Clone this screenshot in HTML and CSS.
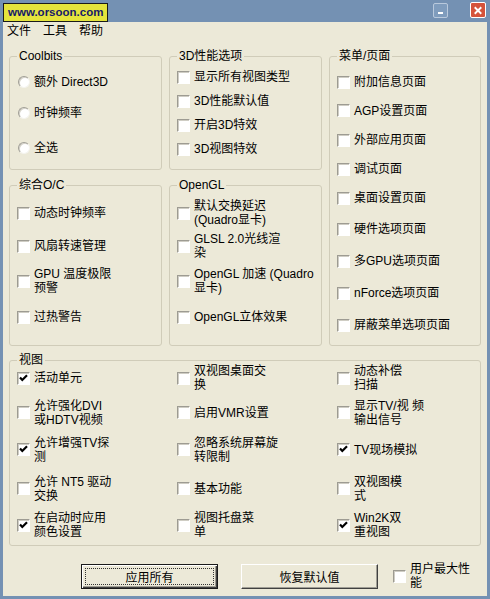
FILE: index.html
```html
<!DOCTYPE html>
<html>
<head>
<meta charset="utf-8">
<link rel="stylesheet" href="styles.css">
</head>
<body>
<div class="window">
  <div class="titlebar">
    <div class="brand">www.orsoon.com</div>
    <div class="tb-btns">
      <span class="tb-min"><span class="dash"></span></span>
      <span class="tb-close"><svg width="15" height="15" viewBox="0 0 15 15"><path d="M4 4 L11 11 M11 4 L4 11" stroke="#fff" stroke-width="2" fill="none"/></svg></span>
    </div>
  </div>
  <div class="client">
    <div class="menubar"><span>文件</span><span>工具</span><span>帮助</span></div>
    <div class="content">
      <div class="top-grid">
        <div class="group g-coolbits">
          <span class="legend">Coolbits</span>
          <div class="item"><span class="radio"></span><span>额外 Direct3D</span></div>
          <div class="item"><span class="radio"></span><span>时钟频率</span></div>
          <div class="item"><span class="radio"></span><span>全选</span></div>
        </div>
        <div class="group g-3d">
          <span class="legend">3D性能选项</span>
          <div class="item"><span class="cb"></span><span>显示所有视图类型</span></div>
          <div class="item"><span class="cb"></span><span>3D性能默认值</span></div>
          <div class="item"><span class="cb"></span><span>开启3D特效</span></div>
          <div class="item"><span class="cb"></span><span>3D视图特效</span></div>
        </div>
        <div class="group g-menu">
          <span class="legend">菜单/页面</span>
          <div class="item"><span class="cb"></span><span>附加信息页面</span></div>
          <div class="item"><span class="cb"></span><span>AGP设置页面</span></div>
          <div class="item"><span class="cb"></span><span>外部应用页面</span></div>
          <div class="item"><span class="cb"></span><span>调试页面</span></div>
          <div class="item"><span class="cb"></span><span>桌面设置页面</span></div>
          <div class="item"><span class="cb"></span><span>硬件选项页面</span></div>
          <div class="item"><span class="cb"></span><span>多GPU选项页面</span></div>
          <div class="item"><span class="cb"></span><span>nForce选项页面</span></div>
          <div class="item"><span class="cb"></span><span>屏蔽菜单选项页面</span></div>
        </div>
        <div class="group g-oc">
          <span class="legend">综合O/C</span>
          <div class="item"><span class="cb"></span><span>动态时钟频率</span></div>
          <div class="item"><span class="cb"></span><span>风扇转速管理</span></div>
          <div class="item"><span class="cb"></span><span class="lbl"><span>GPU 温度极限</span><span>预警</span></span></div>
          <div class="item"><span class="cb"></span><span>过热警告</span></div>
        </div>
        <div class="group g-ogl">
          <span class="legend">OpenGL</span>
          <div class="item"><span class="cb"></span><span class="lbl"><span>默认交换延迟</span><span>(Quadro显卡)</span></span></div>
          <div class="item"><span class="cb"></span><span class="lbl"><span>GLSL 2.0光线渲</span><span>染</span></span></div>
          <div class="item"><span class="cb"></span><span class="lbl"><span>OpenGL 加速 (Quadro</span><span>显卡)</span></span></div>
          <div class="item"><span class="cb"></span><span>OpenGL立体效果</span></div>
        </div>
      </div>
      <div class="group g-view">
        <span class="legend">视图</span>
        <div class="item"><span class="cb on"><svg width="11" height="11" viewBox="0 0 11 11"><path d="M2 4.5 L4.3 7 L9 2.3" stroke="#000" stroke-width="2.2" fill="none"/></svg></span><span>活动单元</span></div>
        <div class="item"><span class="cb"></span><span class="lbl"><span>双视图桌面交</span><span>换</span></span></div>
        <div class="item"><span class="cb"></span><span class="lbl"><span>动态补偿</span><span>扫描</span></span></div>
        <div class="item"><span class="cb"></span><span class="lbl"><span>允许强化DVI</span><span>或HDTV视频</span></span></div>
        <div class="item"><span class="cb"></span><span>启用VMR设置</span></div>
        <div class="item"><span class="cb"></span><span class="lbl"><span>显示TV/视 频</span><span>输出信号</span></span></div>
        <div class="item"><span class="cb on"><svg width="11" height="11" viewBox="0 0 11 11"><path d="M2 4.5 L4.3 7 L9 2.3" stroke="#000" stroke-width="2.2" fill="none"/></svg></span><span class="lbl"><span>允许增强TV探</span><span>测</span></span></div>
        <div class="item"><span class="cb"></span><span class="lbl"><span>忽略系统屏幕旋</span><span>转限制</span></span></div>
        <div class="item"><span class="cb on"><svg width="11" height="11" viewBox="0 0 11 11"><path d="M2 4.5 L4.3 7 L9 2.3" stroke="#000" stroke-width="2.2" fill="none"/></svg></span><span>TV现场模拟</span></div>
        <div class="item"><span class="cb"></span><span class="lbl"><span>允许 NT5 驱动</span><span>交换</span></span></div>
        <div class="item"><span class="cb"></span><span>基本功能</span></div>
        <div class="item"><span class="cb"></span><span class="lbl"><span>双视图模</span><span>式</span></span></div>
        <div class="item"><span class="cb on"><svg width="11" height="11" viewBox="0 0 11 11"><path d="M2 4.5 L4.3 7 L9 2.3" stroke="#000" stroke-width="2.2" fill="none"/></svg></span><span class="lbl"><span>在启动时应用</span><span>颜色设置</span></span></div>
        <div class="item"><span class="cb"></span><span class="lbl"><span>视图托盘菜</span><span>单</span></span></div>
        <div class="item"><span class="cb on"><svg width="11" height="11" viewBox="0 0 11 11"><path d="M2 4.5 L4.3 7 L9 2.3" stroke="#000" stroke-width="2.2" fill="none"/></svg></span><span class="lbl"><span>Win2K双</span><span>重视图</span></span></div>
      </div>
      <div class="bottom">
        <div class="btn default"><span class="focus">应用所有</span></div>
        <div class="btn">恢复默认值</div>
        <div class="item"><span class="cb"></span><span class="lbl"><span>用户最大性</span><span>能</span></span></div>
      </div>
    </div>
  </div>
</div>
</body>
</html>
```
FILE: styles.css
```css
* { box-sizing: border-box; }
html, body { margin: 0; padding: 0; }
body {
  width: 490px;
  height: 599px;
  overflow: hidden;
  background: #7491b3;
  font-family: "Liberation Sans", "Noto Sans CJK SC", sans-serif;
  font-size: 12px;
  color: #000;
}
.window { display: flex; flex-direction: column; height: 599px; }

.titlebar {
  height: 22px;
  flex: none;
  display: flex;
  align-items: flex-start;
  justify-content: space-between;
  padding: 0 4px 0 3px;
}
.brand {
  margin-top: 3px;
  height: 19px;
  width: 105px;
  background: #e4e43c;
  border: 1px solid #1a1a1a;
  font: bold 11.5px "Liberation Sans", sans-serif;
  color: #16196a;
  line-height: 17px;
  padding-left: 4px;
  white-space: nowrap;
}
.tb-btns { display: flex; align-items: flex-start; gap: 22px; margin-top: 3px; }
.tb-min {
  width: 15px; height: 15px;
  background: #7f9cbd;
  border: 1px solid #b9c9dc;
  border-radius: 2px;
  display: flex; align-items: flex-end;
  padding: 0 0 3px 4px;
}
.tb-min .dash { width: 5px; height: 2px; background: #fff; }
.tb-close {
  width: 16px; height: 16px;
  margin-top: -1px;
  background: #d5533b;
  border: 1px solid #fff;
  border-radius: 2px;
  display: flex; align-items: center; justify-content: center;
}

.client {
  flex: 1;
  background: #ece9d8;
  margin: 0 3px 3px 3px;
  display: flex;
  flex-direction: column;
}
.menubar {
  height: 18px;
  display: flex;
  gap: 12px;
  padding-left: 4px;
  align-items: center;
  line-height: 18px;
}
.content { padding: 16px 0 0 6px; }

.top-grid {
  display: grid;
  grid-template-columns: 153px 153px 152px;
  grid-template-rows: 114px 161px;
  column-gap: 7px;
  row-gap: 15px;
}
.group {
  position: relative;
  border: 1px solid #d0ccb9;
  border-radius: 3px;
  display: grid;
  align-content: start;
  align-items: center;
  padding-left: 7px;
}
.legend {
  position: absolute;
  top: -8px;
  left: 7px;
  padding: 0 2px;
  background: #ece9d8;
  line-height: 14px;
}
.item {
  display: flex;
  align-items: center;
  gap: 4px;
  white-space: nowrap;
  line-height: 14px;
}
.lbl { display: flex; flex-direction: column; }
.lbl > span { display: block; height: 14px; line-height: 14px; }

.g-coolbits { grid-column: 1; grid-row: 1; padding-top: 10px; grid-template-rows: 30px 32px 38px; }
.g-3d { grid-column: 2; grid-row: 1; padding-top: 8px; grid-template-rows: 24px 24px 24px 24px; }
.g-menu { grid-column: 3; grid-row: 1 / span 2; padding-top: 11px; grid-template-rows: 28px 29px 30px 28px 30px 32px 32px 32px 32px; }
.g-oc { grid-column: 1; grid-row: 2; padding-top: 11px; grid-template-rows: 32px 34px 36px 36px; }
.g-ogl { grid-column: 2; grid-row: 2; padding-top: 11px; grid-template-rows: 32px 34px 36px 36px; }
.g-view {
  margin-top: 14px;
  width: 472px;
  height: 186px;
  padding-top: 1px;
  grid-template-columns: 160px 160px auto;
  grid-template-rows: 32px 37px 37px 41px 32px;
}

.cb {
  flex: none;
  width: 13px; height: 13px;
  background: #fff;
  border: 1px solid;
  border-color: #9d9b92 #fff #fff #9d9b92;
  box-shadow: inset 1px 1px 0 #cfcdc4;
  display: flex; align-items: center; justify-content: center;
}
.cb svg { display: block; }
.radio {
  flex: none;
  width: 12px; height: 12px;
  margin-left: 1px;
  border-radius: 50%;
  background: #fff;
  border: 1px solid;
  border-color: #a09e95 #f4f3ee #f4f3ee #a09e95;
  box-shadow: inset 1px 1px 0 #d4d2c8;
}

.bottom {
  margin-top: 16px;
  display: flex;
  align-items: center;
  padding-left: 72px;
}
.btn {
  width: 137px;
  height: 25px;
  display: flex;
  align-items: center;
  justify-content: center;
  background: #ece9d8;
  border: 1px solid;
  border-color: #fff #404040 #404040 #fff;
  box-shadow: inset -1px -1px 0 #a09e95;
}
.btn.default {
  border: 1px solid #1a1a1a;
  box-shadow: inset 1px 1px 0 #fff, inset -1px -1px 0 #404040, inset -2px -2px 0 #a09e95;
  padding: 3px;
  margin-right: 23px;
}
.btn.default .focus {
  width: 100%;
  height: 100%;
  border: 1px dotted #333;
  display: flex; align-items: center; justify-content: center;
}
.bottom .item { margin-left: 15px; }
```
